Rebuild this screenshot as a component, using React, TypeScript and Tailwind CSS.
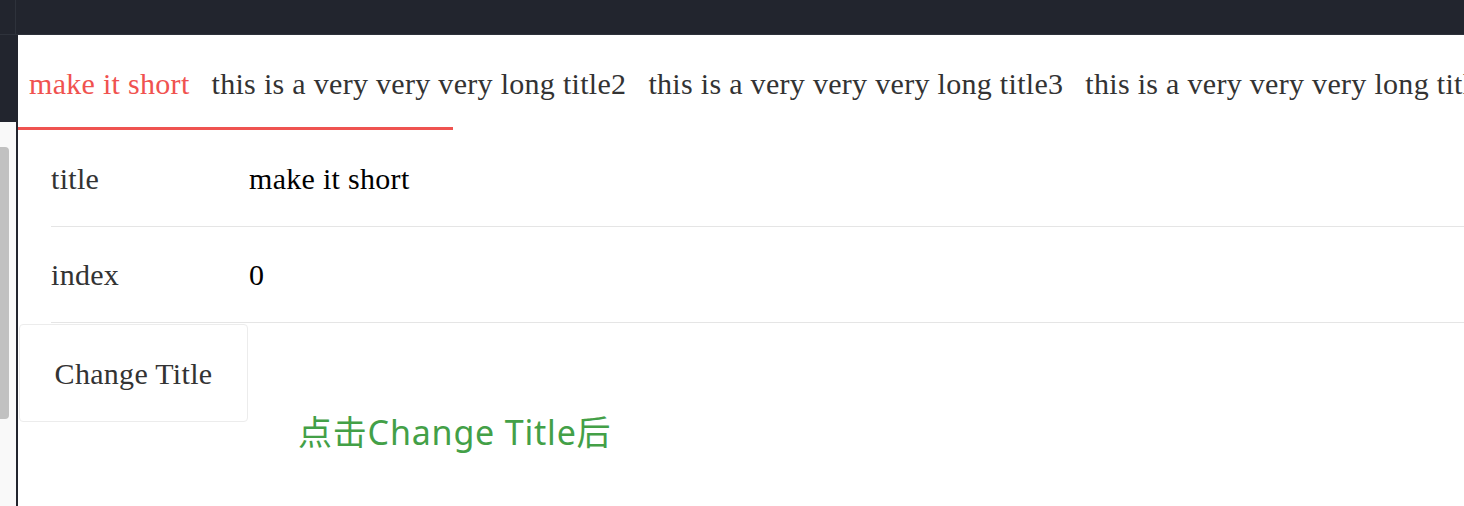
import React from "react";

const serif = {
  fontFamily: '"Liberation Serif", "Times New Roman", serif',
  letterSpacing: "0.3px",
};

export default function App() {
  const tabs = [
    "make it short",
    "this is a very very very long title2",
    "this is a very very very long title3",
    "this is a very very very long title4",
  ];
  return (
    <div className="w-[1464px] h-[506px] overflow-hidden bg-white flex flex-col">
      <div className="h-[35px] shrink-0 bg-[#22252e] border-b border-[#2e323b] flex">
        <div className="w-[16px] h-full border-r border-[#2e323b]" />
      </div>
      <div className="flex-1 flex min-h-0">
        <div className="w-[16px] shrink-0 flex flex-col">
          <div className="h-[87px] bg-[#22252e]" />
          <div className="flex-1 bg-[#f9f9f9] pt-[25px]">
            <div className="w-[9px] h-[272px] bg-[#c1c1c1] rounded-r-[4px]" />
          </div>
        </div>
        <div className="w-[2px] shrink-0 bg-[#22252e]" />
        <div className="flex-1 min-w-0 flex flex-col" style={serif}>
          <div className="relative h-[95px] shrink-0 overflow-hidden">
            <div className="flex h-full items-center whitespace-nowrap text-[30px] pt-[2px]">
              {tabs.map((t, i) => (
                <div
                  key={i}
                  className={
                    i === 0
                      ? "px-[11px] text-[#f0524f]"
                      : "px-[11px] text-[#333333]"
                  }
                >
                  {t}
                </div>
              ))}
            </div>
            <div className="absolute left-0 bottom-[0px] w-[435px] h-[3px] bg-[#ef5350]" />
          </div>
          <div className="pl-[33px] text-[30px]">
            <div className="flex items-center h-[97px] border-b border-[#e5e5e5]">
              <div className="w-[198px] text-[#333333]">title</div>
              <div className="text-black">make it short</div>
            </div>
            <div className="flex items-center h-[96px] border-b border-[#e5e5e5]">
              <div className="w-[198px] text-[#333333]">index</div>
              <div className="text-black">0</div>
            </div>
          </div>
          <div className="flex items-start">
            <button
              className="ml-[1px] mt-[1px] w-[229px] h-[98px] border border-[#ececec] rounded-[4px] bg-white text-[30px] text-[#333333]"
              style={serif}
            >
              Change Title
            </button>
            <div
              className="ml-[50px] mt-[92px] text-[34px] leading-none text-[#43a047]"
              style={{
                fontFamily: '"Noto Sans", "Noto Sans CJK SC", sans-serif',
                letterSpacing: "0.8px",
              }}
            >
              点击Change Title后
            </div>
          </div>
        </div>
      </div>
    </div>
  );
}
